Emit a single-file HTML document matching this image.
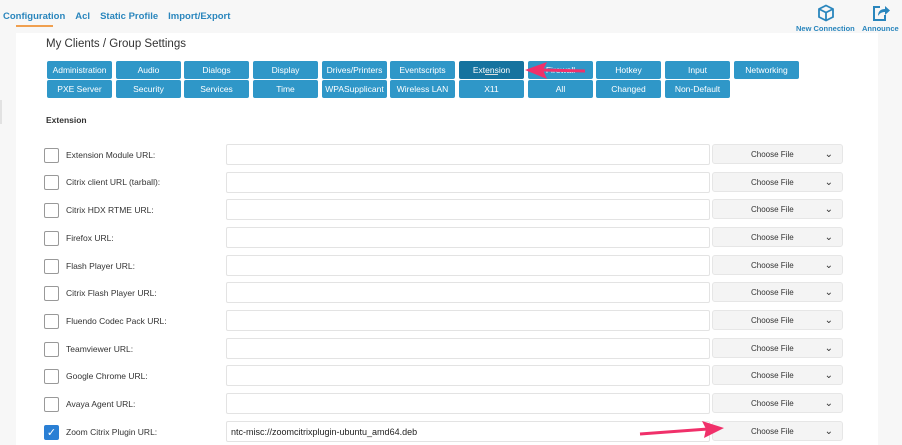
<!DOCTYPE html>
<html><head><meta charset="utf-8"><style>
*{box-sizing:border-box;margin:0;padding:0}
body{width:902px;height:445px;overflow:hidden;background:#f7f7f7;font-family:"Liberation Sans",sans-serif;position:relative}
.tabs{position:absolute;top:11px;left:3px;font-size:9.5px;color:#2a86bd;font-weight:bold}
.tabs span{margin-right:10px}
.tabs .act{position:relative}
.tabs .act:after{content:"";position:absolute;left:13px;right:12px;top:14px;height:2px;background:#f0a050}
.panel{position:absolute;left:16px;top:33px;width:862px;height:412px;background:#fff}
.title{position:absolute;left:46px;top:38px;font-size:11.5px;color:#333}
.btn{position:absolute;height:18px;width:65px;background:#2f97c8;border-radius:2px;color:#fff;font-size:8.5px;text-align:center;line-height:18px}
.btn.sel{background:#16739f}
.sec{position:absolute;left:46px;top:115px;font-size:8.5px;font-weight:bold;color:#333}
.cb{position:absolute;left:44px;width:15px;height:15px;border:1px solid #999;border-radius:2px;background:#fff}
.cb.on{background:#2a7fd4;border-color:#2a7fd4;color:#fff;font-size:11px;line-height:14px;text-align:center}
.lbl{position:absolute;left:66px;font-size:8.5px;color:#333}
.inp{position:absolute;left:226px;width:484px;height:21px;border:1px solid #e3e3e3;border-radius:2px;font-size:9px;color:#222;padding-left:4px;line-height:20px}
.cf{position:absolute;left:712px;width:131px;height:20px;background:#f4f4f4;border:1px solid #e6e6e6;border-radius:3px;font-size:8px;color:#333;line-height:19px;padding-left:38px}
.cf:after{content:"⌄";position:absolute;right:9px;top:0px;font-size:10px}
.ic{position:absolute;top:24px;font-size:7.5px;color:#2a86bd;font-weight:bold}
</style></head><body>
<div class="tabs"><span class="act">Configuration</span><span>Acl</span><span>Static Profile</span><span>Import/Export</span></div>
<svg style="position:absolute;left:817px;top:4px" width="18" height="18" viewBox="0 0 18 18" fill="none" stroke="#2a86bd" stroke-width="1.8"><path d="M9 1.5 L16 5 V13 L9 16.5 L2 13 V5 Z M2 5 L9 8.5 L16 5 M9 8.5 V16.5"/></svg>
<svg style="position:absolute;left:871px;top:4px" width="20" height="18" viewBox="0 0 20 18"><path d="M9 3 H3 V16 H14 V11" fill="none" stroke="#2a86bd" stroke-width="2"/><path d="M7 12 C7 7 10 5 14 5 V2 L19 6.5 L14 11 V8 C11 8 9 9 7 12 Z" fill="#2a86bd"/></svg>
<div class="ic" style="left:796px">New Connection</div>
<div class="ic" style="left:862px">Announce</div>
<div class="panel"></div>
<div style="position:absolute;left:0;top:100px;width:2px;height:24px;background:#e2e2e2"></div>
<div class="title">My Clients / Group Settings</div>
<div class="btn" style="left:47px;top:61px">Administration</div>
<div class="btn" style="left:116px;top:61px">Audio</div>
<div class="btn" style="left:184px;top:61px">Dialogs</div>
<div class="btn" style="left:253px;top:61px">Display</div>
<div class="btn" style="left:322px;top:61px">Drives/Printers</div>
<div class="btn" style="left:390px;top:61px">Eventscripts</div>
<div class="btn sel" style="left:459px;top:61px">Extension<div style="position:absolute;left:26px;top:13px;width:13px;height:1px;background:#ddd"></div></div>
<div class="btn" style="left:528px;top:61px">Firewall</div>
<div class="btn" style="left:596px;top:61px">Hotkey</div>
<div class="btn" style="left:665px;top:61px">Input</div>
<div class="btn" style="left:734px;top:61px">Networking</div>
<div class="btn" style="left:47px;top:80px">PXE Server</div>
<div class="btn" style="left:116px;top:80px">Security</div>
<div class="btn" style="left:184px;top:80px">Services</div>
<div class="btn" style="left:253px;top:80px">Time</div>
<div class="btn" style="left:322px;top:80px">WPASupplicant</div>
<div class="btn" style="left:390px;top:80px">Wireless LAN</div>
<div class="btn" style="left:459px;top:80px">X11</div>
<div class="btn" style="left:528px;top:80px">All</div>
<div class="btn" style="left:596px;top:80px">Changed</div>
<div class="btn" style="left:665px;top:80px">Non-Default</div>
<svg style="position:absolute;left:515px;top:60px" width="72" height="20"><path d="M70 11 L28 10" stroke="#f0306a" stroke-width="3"/><path d="M10 10 L32 2 L28 10 L32 19 Z" fill="#f0306a"/></svg>
<div class="sec">Extension</div>

<div class="cb" style="top:148px"></div><div class="lbl" style="top:150px">Extension Module URL:</div><div class="inp" style="top:144px"></div><div class="cf" style="top:144px">Choose File</div>
<div class="cb" style="top:175px"></div><div class="lbl" style="top:177px">Citrix client URL (tarball):</div><div class="inp" style="top:172px"></div><div class="cf" style="top:172px">Choose File</div>
<div class="cb" style="top:203px"></div><div class="lbl" style="top:205px">Citrix HDX RTME URL:</div><div class="inp" style="top:199px"></div><div class="cf" style="top:199px">Choose File</div>
<div class="cb" style="top:231px"></div><div class="lbl" style="top:233px">Firefox URL:</div><div class="inp" style="top:227px"></div><div class="cf" style="top:227px">Choose File</div>
<div class="cb" style="top:259px"></div><div class="lbl" style="top:261px">Flash Player URL:</div><div class="inp" style="top:255px"></div><div class="cf" style="top:255px">Choose File</div>
<div class="cb" style="top:286px"></div><div class="lbl" style="top:288px">Citrix Flash Player URL:</div><div class="inp" style="top:282px"></div><div class="cf" style="top:282px">Choose File</div>
<div class="cb" style="top:314px"></div><div class="lbl" style="top:316px">Fluendo Codec Pack URL:</div><div class="inp" style="top:310px"></div><div class="cf" style="top:310px">Choose File</div>
<div class="cb" style="top:342px"></div><div class="lbl" style="top:344px">Teamviewer URL:</div><div class="inp" style="top:338px"></div><div class="cf" style="top:338px">Choose File</div>
<div class="cb" style="top:369px"></div><div class="lbl" style="top:371px">Google Chrome URL:</div><div class="inp" style="top:365px"></div><div class="cf" style="top:365px">Choose File</div>
<div class="cb" style="top:397px"></div><div class="lbl" style="top:399px">Avaya Agent URL:</div><div class="inp" style="top:393px"></div><div class="cf" style="top:393px">Choose File</div>
<div class="cb on" style="top:425px">✓</div><div class="lbl" style="top:427px">Zoom Citrix Plugin URL:</div><div class="inp" style="top:421px">ntc-misc://zoomcitrixplugin-ubuntu_amd64.deb</div><div class="cf" style="top:421px">Choose File</div>
<svg style="position:absolute;left:638px;top:420px" width="90" height="22"><path d="M2 14 L70 9" stroke="#f0306a" stroke-width="3"/><path d="M86 8 L64 1 L68 9 L66 18 Z" fill="#f0306a"/></svg>
</body></html>
